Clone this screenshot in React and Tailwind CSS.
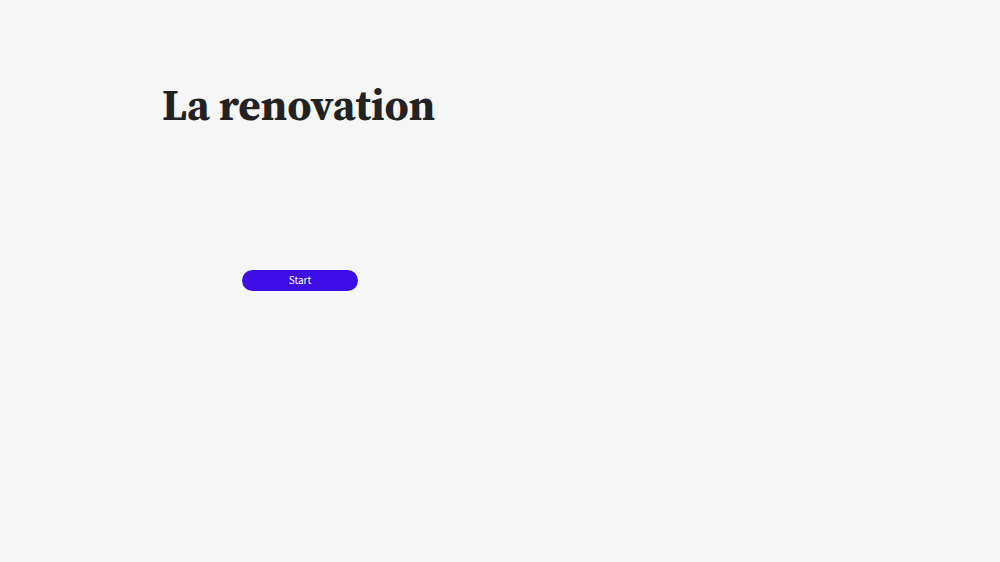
import React from 'react';

const App = () => {
  return (
    <main className="min-h-screen bg-[#f6f6f6]">
      <div className="grid grid-cols-5">
        <section className="col-span-3 flex flex-col items-center pt-20">
          {/* Title */}
          <h1 className="w-[276px] whitespace-nowrap font-['Source_Serif_Pro','Source_Serif_4','Liberation_Serif',serif] text-[43px] leading-[50px] font-bold text-[#222222]">
            La renovation
          </h1>

          {/* Start */}
          <button
            type="button"
            className="mt-[140px] w-[116px] h-[21px] pb-px rounded-full bg-[#3d0ee6] hover:bg-[#340cc4] 
                      font-['Noto_Sans_CJK_SC',sans-serif] text-[10px] leading-4 text-white transition-colors"
          >
            Start
          </button>
        </section>
      </div>
    </main>
  );
};

export default App;
